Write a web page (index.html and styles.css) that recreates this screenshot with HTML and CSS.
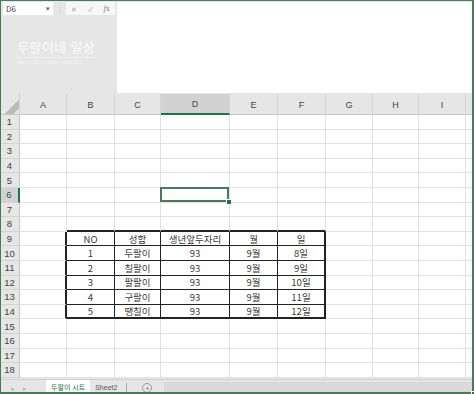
FILE: index.html
```html
<!DOCTYPE html>
<html lang="ko">
<head>
    <meta charset="UTF-8">
    <title>두팔이 시트</title>
    <link rel="stylesheet" href="styles.css">
</head>
<body>

<!-- Name box + formula bar -->
<div class="top">
    <div class="top-left">
        <div class="bar-row">
            <div class="namebox">D6<span class="caret">▾</span></div>
            <span class="dots">⋮</span>
            <div class="fx-buttons">
                <span>✕</span>
                <span>✓</span>
                <span class="fx"><i>f</i>x</span>
            </div>
        </div>
    </div>
    <div class="formula"></div>
    <div class="watermark">
        <div class="wm-title">두팔이네 일상</div>
        <div class="wm-url">https://blog.naver.com/k83</div>
    </div>
</div>

<!-- Sheet grid -->
<div class="grid" id="grid"></div>

<!-- Sheet tabs -->
<div class="tabs">
    <span class="arrow">◂</span>
    <span class="arrow">▸</span>
    <span class="tab active">두팔이 시트</span>
    <span class="tab">Sheet2</span>
    <span class="tab-sep"></span>
    <span class="add">+</span>
    <div class="hscroll"></div>
</div>

<script>
const cols = ["", "A", "B", "C", "D", "E", "F", "G", "H", "I", ""];
const data = {
    9:  ["NO", "성함", "생년앞두자리", "월", "일"],
    10: ["1", "두팔이", "93", "9월", "8일"],
    11: ["2", "칠팔이", "93", "9월", "9일"],
    12: ["3", "팔팔이", "93", "9월", "10일"],
    13: ["4", "구팔이", "93", "9월", "11일"],
    14: ["5", "땡칠이", "93", "9월", "12일"]
};
const grid = document.getElementById("grid");

cols.forEach((c, i) => {
    let h = document.createElement("div");
    h.className = i === 0 ? "cell corner" : "cell col-head";
    if (c === "D") h.classList.add("hl");
    h.textContent = c;
    grid.appendChild(h);
});

for (let r = 1; r <= 18; r++) {
    for (let c = 0; c < cols.length; c++) {
        let cell = document.createElement("div");
        cell.className = "cell";
        if (c === 0) {
            cell.classList.add("row-head");
            if (r === 6) cell.classList.add("hl");
            cell.textContent = r;
        } else {
            let inTable = r >= 9 && r <= 14 && c >= 2 && c <= 6;
            if (inTable) {
                cell.classList.add("t");
                cell.textContent = data[r][c - 2];
                if (c === 6) cell.classList.add("t-right");
                if (r === 14) cell.classList.add("t-bottom");
            }
            // thick edges above and left of the table
            if (r === 8 && c >= 2 && c <= 6) cell.classList.add("above");
            if (r >= 9 && r <= 14 && c === 1) cell.classList.add("left-of");
            if (r === 6 && c === 4) cell.classList.add("active");
        }
        grid.appendChild(cell);
    }
}
</script>

</body>
</html>
```

FILE: styles.css
```css
body { margin: 0; width: 474px; height: 394px; overflow: hidden; background: #e6e6e6; font-family: "Noto Sans CJK KR", "Noto Sans", sans-serif; color: #333; }

.top { position: relative; display: flex; height: 94px; }
.top-left { width: 117px; padding: 2px 0 0 3px; box-sizing: border-box; }
.bar-row { display: flex; align-items: center; height: 13px; }
.namebox { position: relative; width: 50px; height: 13px; background: #fff; font-size: 8px; line-height: 13px; padding-left: 3px; box-sizing: border-box; color: #444; }
.caret { position: absolute; right: 3px; top: 0; font-size: 7px; color: #666; }
.dots { width: 13px; text-align: center; font-size: 8px; color: #bbb; }
.fx-buttons { display: flex; align-items: center; justify-content: space-around; width: 49px; height: 13px; background: #f7f7f7; font-size: 7px; color: #aaa; }
.fx { font-family: "Liberation Serif", serif; font-size: 8px; color: #777; }
.formula { flex: 1; margin: 2px 0 1px; background: #fff; }

.watermark { position: absolute; left: 17px; top: 39px; color: #f6f6f6; text-shadow: 0 0 1px #dcdcdc; }
.wm-title { font-size: 13px; font-weight: 700; letter-spacing: 0.4px; line-height: 16px; }
.wm-url { font-family: "Liberation Sans", sans-serif; font-size: 5.5px; margin-top: 2px; border-top: 1px solid #efefef; padding-top: 1px; }

.grid { display: grid; grid-template-columns: 20px 47px 48px 46px 69px 48px 48px 47px 46px 47px 1fr; grid-template-rows: 21px; grid-auto-rows: 14.6px; background: #fff; }
.cell { box-sizing: border-box; border-right: 1px solid #e2e2e2; border-bottom: 1px solid #e2e2e2; font-size: 9.5px; display: flex; align-items: center; justify-content: center; white-space: nowrap; position: relative; }

.corner { background: #e6e6e6 linear-gradient(135deg, transparent 62%, #bcbcbc 62%, #bcbcbc 86%, transparent 86%); border-right: 1px solid #d0d0d0; border-bottom: 1px solid #c8c8c8; }
.col-head { background: #e6e6e6; border-right: 1px solid #d4d4d4; border-bottom: 1px solid #c8c8c8; font-family: "Liberation Sans", sans-serif; font-size: 9px; color: #444; padding-top: 1px; }
.row-head { background: #e6e6e6; border-right: 1px solid #c8c8c8; border-bottom: 1px solid #d4d4d4; font-family: "Liberation Sans", sans-serif; font-size: 9.5px; color: #444; }
.col-head.hl { background: #d2d2d2; border-bottom: 2px solid #217346; color: #2a5a3e; }
.row-head.hl { background: #d2d2d2; border-right: 2px solid #217346; color: #2a5a3e; }

.t { border-right: 1px solid #222; border-bottom: 1px solid #222; color: #3a3a3a; }
.t-right { border-right: 2px solid #222; }
.t-bottom { border-bottom: 2px solid #222; }
.above { border-bottom: 2px solid #222; }
.left-of { border-right: 2px solid #222; }

.active::after { content: ""; position: absolute; left: -1px; top: -1px; right: 0; bottom: 0; border: 2px solid #4a7a5c; }
.active::before { content: ""; position: absolute; right: -3px; bottom: -3px; width: 4px; height: 4px; background: #217346; border: 1px solid #fff; z-index: 1; }

.tabs { display: flex; align-items: center; height: 16px; margin-top: 1px; border-top: 1px solid #d0d0d0; background: #e6e6e6; font-size: 7px; color: #555; }
.arrow { width: 13px; text-align: center; color: #bbb; font-size: 7px; }
.arrow:first-child { margin-left: 5px; }
.tab { height: 100%; display: flex; align-items: center; padding: 0 5px; }
.tab.active { margin-left: 15px; background: #fff; color: #217346; border-bottom: 2px solid #217346; box-sizing: border-box; padding: 0 5px; }
.tab:not(.active) { font-family: "Liberation Sans", sans-serif; }
.tab-sep { width: 1px; height: 9px; background: #aaa; margin: 0 4px; }
.add { width: 8px; height: 8px; margin-left: 11px; border: 1px solid #999; border-radius: 50%; font-size: 7px; line-height: 8px; text-align: center; color: #777; }
.hscroll { flex: 1; height: 12px; margin-left: 12px; background: #dadada; }
```
